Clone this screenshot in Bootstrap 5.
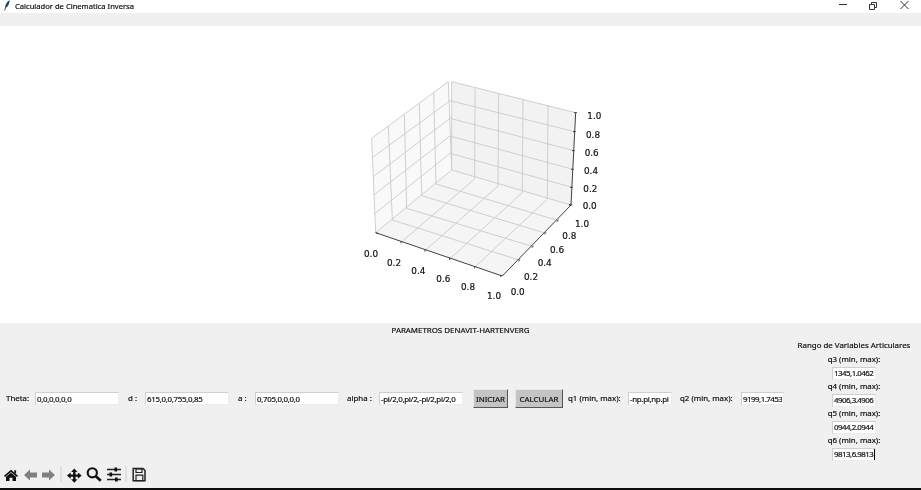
<!DOCTYPE html>
<html lang="es">
<head>
<meta charset="utf-8">
<title>Calculador de Cinematica Inversa</title>
<link href="https://cdn.jsdelivr.net/npm/bootstrap@5.3.0/dist/css/bootstrap.min.css" rel="stylesheet">
<style>
html,body{height:490px;overflow:hidden;background:#f0f0f0;}
body{font-family:"Noto Sans","Open Sans",sans-serif;font-size:7.900px;line-height:13.5px;color:#0c0c0c;-webkit-text-stroke:.18px #0c0c0c;}
.shell{height:490px;filter:blur(.3px);}
.titlebar{height:13px;background:#fff;font-size:7.600px;line-height:10px;padding-bottom:2px;}
.titlebar .ttl{margin-left:5px;}
.win-ctl svg{display:block;}
.menuband{height:13px;background:#f0f0f0;}
.figure-area{height:297px;background:#fff;}
.figure-area svg{display:block;}
.plot-label{font-family:"DejaVu Sans",sans-serif;font-size:26.500px;fill:#111;stroke:#111;stroke-width:.6px;-webkit-text-stroke:0;}
.panel{height:167px;background:#f0f0f0;}
.panel-head{height:16px;line-height:15px;padding-top:0;text-align:center;}
.panel-body{height:123px;}
.fields{width:787px;display:grid;grid-template-columns:35px 84px 26px 84px 26px 84px 40px 84px 45px 55px 65px 44px 69px 43px;align-items:center;padding-bottom:4px;}
.fld-lbl{white-space:nowrap;}
.lb-1{padding-left:6px;}
.lb-2{padding-left:9px;}
.lb-3{padding-left:8px;}
.lb-4{padding-left:5px;}
.form-control.tk-entry{height:13px;min-height:0;padding:0 1px;font-size:7.900px;letter-spacing:-.3px;line-height:12px;color:#0c0c0c;background-color:#fff;border:1px solid #ececec;border-top-color:#cfcfcf;border-left-color:#cfcfcf;border-radius:0;box-shadow:none;}
.form-control.tk-entry.tk-tight{letter-spacing:-.5px;}
.btn.tk-btn{height:19px;padding:0;font-size:7.900px;line-height:16px;color:#0c0c0c;background:#c4c4c4;border:1px solid #8e8e8e;border-top-color:#e8e8e8;border-left-color:#e8e8e8;border-right-color:#555;border-bottom-color:#555;border-radius:0;}
.btn-a{width:35px;margin-left:10px;}
.btn-b{width:48px;margin-left:7px;}
.rangos{width:134px;}
.rangos .form-control.tk-entry{width:44px;margin:0 auto;}
.rg-t,.rg-e{height:13.5px;}
.rg-first{height:13.5px;margin-bottom:.5px;}
.tk-caret.form-control.tk-entry{background-image:linear-gradient(#000,#000);background-repeat:no-repeat;background-size:1px 11px;background-position:right 0 center;}
.toolbar{height:25.500px;}
.toolbar svg{display:block;}
.bottom-edge{height:2.500px;background:#0c0c0c;}
</style>
</head>
<body>
<div class="shell d-flex flex-column">
  <div class="titlebar d-flex align-items-center justify-content-between">
    <div class="d-flex align-items-center ps-1">
      <svg width="6" height="11" viewBox="0 0 6 11"><path d="M5.800.2C3.500 1 1.800 3.300 1.200 6.200L.3 10.600l.7.2 1-3.200C4 7.200 5.300 3.600 5.800.2z" fill="#2b4a6b"/></svg>
      <span class="ttl">Calculador de Cinematica Inversa</span>
    </div>
    <div class="win-ctl d-flex">
      <svg width="121" height="11" viewBox="0 0 121 11"><path d="M39 4.500h8" stroke="#333" fill="none"/><path d="M69.500 4.500h5v5h-5zM71.500 4.500v-2h5v5h-2" stroke="#333" fill="none"/><path d="M100.500 1l8 8M108.500 1l-8 8" stroke="#333" fill="none"/></svg>
    </div>
  </div>
  <div class="menuband"></div>
  <div class="figure-area">
    <svg width="921" height="297" viewBox="-1020 -102 2763 891">
      <polygon points="107,518 95,235 325,65 335,330" fill="#f9f9f9"/>
      <polygon points="335,330 335,65 707,158 693,435" fill="#f2f2f2"/>
      <polygon points="107,518 335,330 693,435 487,648" fill="#f5f5f5"/>
      <g stroke="#cbcbcb" stroke-width="2.800" fill="none">
        <path d="M107,518 95,235 325,65 335,330 107,518"/>
        <path d="M335,330 335,65 707,158"/>
        <path d="M335,330 693,435"/>
        <path d="M157,480 145,198M200,445 193,163M245,407 238,131M288,372 281,98"/>
        <path d="M103,462 330,280M101,405 330,228M100,350 330,175M97,293 330,122"/>
        <path d="M404,357 405,85M474,378 476,100M547,398 549,117M622,417 624,135"/>
        <path d="M330,280 696,382M330,228 699,328M330,175 702,272M330,122 704,215"/>
        <path d="M183,547 404,357M255,572 474,378M329,597 547,398M404,622 622,417"/>
        <path d="M157,480 540,601M200,445 580,560M245,407 618,520M288,372 655,482"/>
      </g>
      <g stroke="#333" stroke-width="2.800" fill="none">
        <path d="M107,518 487,648 693,435 707,158"/>
        <path d="M107,518l8,3M183,544v6M255,569v6M329,594v6M404,619v6M487,645l-7,5"/>
        <path d="M540,598l-4,6M580,557l-4,6M618,517l-4,6M655,479l-4,6M693,432l-6,3"/>
        <path d="M702,158h9M699,215h8M696,272h8M693,328h8M690,382h8M687,435h10"/>
      </g>
      <text class="plot-label" x="72" y="592">0.0</text>
      <text class="plot-label" x="141" y="617">0.2</text>
      <text class="plot-label" x="214" y="642">0.4</text>
      <text class="plot-label" x="289" y="665">0.6</text>
      <text class="plot-label" x="363" y="690">0.8</text>
      <text class="plot-label" x="441" y="716">1.0</text>
      <text class="plot-label" x="512" y="706">0.0</text>
      <text class="plot-label" x="552" y="661">0.2</text>
      <text class="plot-label" x="593" y="619">0.4</text>
      <text class="plot-label" x="630" y="578">0.6</text>
      <text class="plot-label" x="667" y="537">0.8</text>
      <text class="plot-label" x="705" y="500">1.0</text>
      <text class="plot-label" x="728" y="447">0.0</text>
      <text class="plot-label" x="730" y="395">0.2</text>
      <text class="plot-label" x="732" y="342">0.4</text>
      <text class="plot-label" x="734" y="288">0.6</text>
      <text class="plot-label" x="738" y="233">0.8</text>
      <text class="plot-label" x="742" y="177">1.0</text>
    </svg>
  </div>
  <div class="panel d-flex flex-column">
    <div class="panel-head">PARAMETROS DENAVIT-HARTENVERG</div>
    <div class="panel-body d-flex">
      <div class="fields">
        <span class="fld-lbl lb-1">Theta:</span><input class="form-control tk-entry" value="0,0,0,0,0,0">
        <span class="fld-lbl lb-2">d :</span><input class="form-control tk-entry" value="615,0,0,755,0,85">
        <span class="fld-lbl lb-2">a :</span><input class="form-control tk-entry" value="0,705,0,0,0,0">
        <span class="fld-lbl lb-3">alpha :</span><input class="form-control tk-entry" value="-pi/2,0,pi/2,-pi/2,pi/2,0">
        <div><button class="btn tk-btn btn-a" type="button">INICIAR</button></div>
        <div><button class="btn tk-btn btn-b" type="button">CALCULAR</button></div>
        <span class="fld-lbl lb-4">q1 (min, max):</span><input class="form-control tk-entry" value="-np.pi,np.pi">
        <span class="fld-lbl lb-3">q2 (min, max):</span><input class="form-control tk-entry tk-tight" value="9199,1.7453">
      </div>
      <div class="rangos text-center">
        <div class="rg-first">Rango de Variables Articulares</div>
        <div class="rg-t">q3 (min, max):</div>
        <div class="rg-e"><input class="form-control tk-entry tk-tight" value="1345,1.0462"></div>
        <div class="rg-t">q4 (min, max):</div>
        <div class="rg-e"><input class="form-control tk-entry tk-tight" value="4906,3.4906"></div>
        <div class="rg-t">q5 (min, max):</div>
        <div class="rg-e"><input class="form-control tk-entry tk-tight" value="0944,2.0944"></div>
        <div class="rg-t">q6 (min, max):</div>
        <div class="rg-e"><input class="form-control tk-entry tk-tight tk-caret" value="9813,6.9813"></div>
      </div>
    </div>
    <div class="toolbar">
      <svg width="150" height="25" viewBox="0 0 150 25">
        <path d="M4 13.800 11 7.800l7 6-1 1.100-6-5-6 5z" fill="#111"/>
        <rect x="14.300" y="8.300" width="1.800" height="3.200" fill="#111"/>
        <path d="M6 14.800 11 10.700l5 4.100V19h-3.500v-3.200h-3V19H6z" fill="#111"/>
        <path d="M24 13 30 7.500V10.500h7v5h-7v3z" fill="#808080"/>
        <path d="M55 13 49 7.500V10.500h-7v5h7v3z" fill="#808080"/>
        <path d="M61 4v16M126 4v16" stroke="#cfcfcf" fill="none"/>
        <path d="M74.300 6.500 77.500 10H75.500v2.400H77.900V10.400L81.700 13.600 77.900 16.800V14.800H75.500V17.200H77.500L74.300 20.700 71.100 17.200H73.100V14.800H70.700V16.800L66.900 13.600 70.700 10.400V12.400H73.100V10H71.100z" fill="#111"/>
        <circle cx="92.300" cy="10.800" r="4.600" fill="none" stroke="#111" stroke-width="2.100"/>
        <path d="M95.800 14.300 100.800 18.800" stroke="#111" stroke-width="2.700" fill="none"/>
        <path d="M107 7.500h14M107 12.500h14M107 17.500h14" stroke="#222" stroke-width="1.300" fill="none"/>
        <path d="M114.500 5.500h2.600v4h-2.600zM109.500 10.500h2.600v4h-2.600zM115 15.500h2.600v4H115z" fill="#111"/>
        <path d="M133.200 6.500H143l2 2V18.800H133.200z" fill="none" stroke="#222" stroke-width="1.500"/>
        <path d="M136 6.800h6v3.700h-6zM136 13.200h6.800v5.500H136z" fill="none" stroke="#222" stroke-width="1.200"/>
      </svg>
    </div>
    <div class="bottom-edge"></div>
  </div>
</div>
<script src="https://cdn.jsdelivr.net/npm/bootstrap@5.3.0/dist/js/bootstrap.bundle.min.js"></script>
</body>
</html>
